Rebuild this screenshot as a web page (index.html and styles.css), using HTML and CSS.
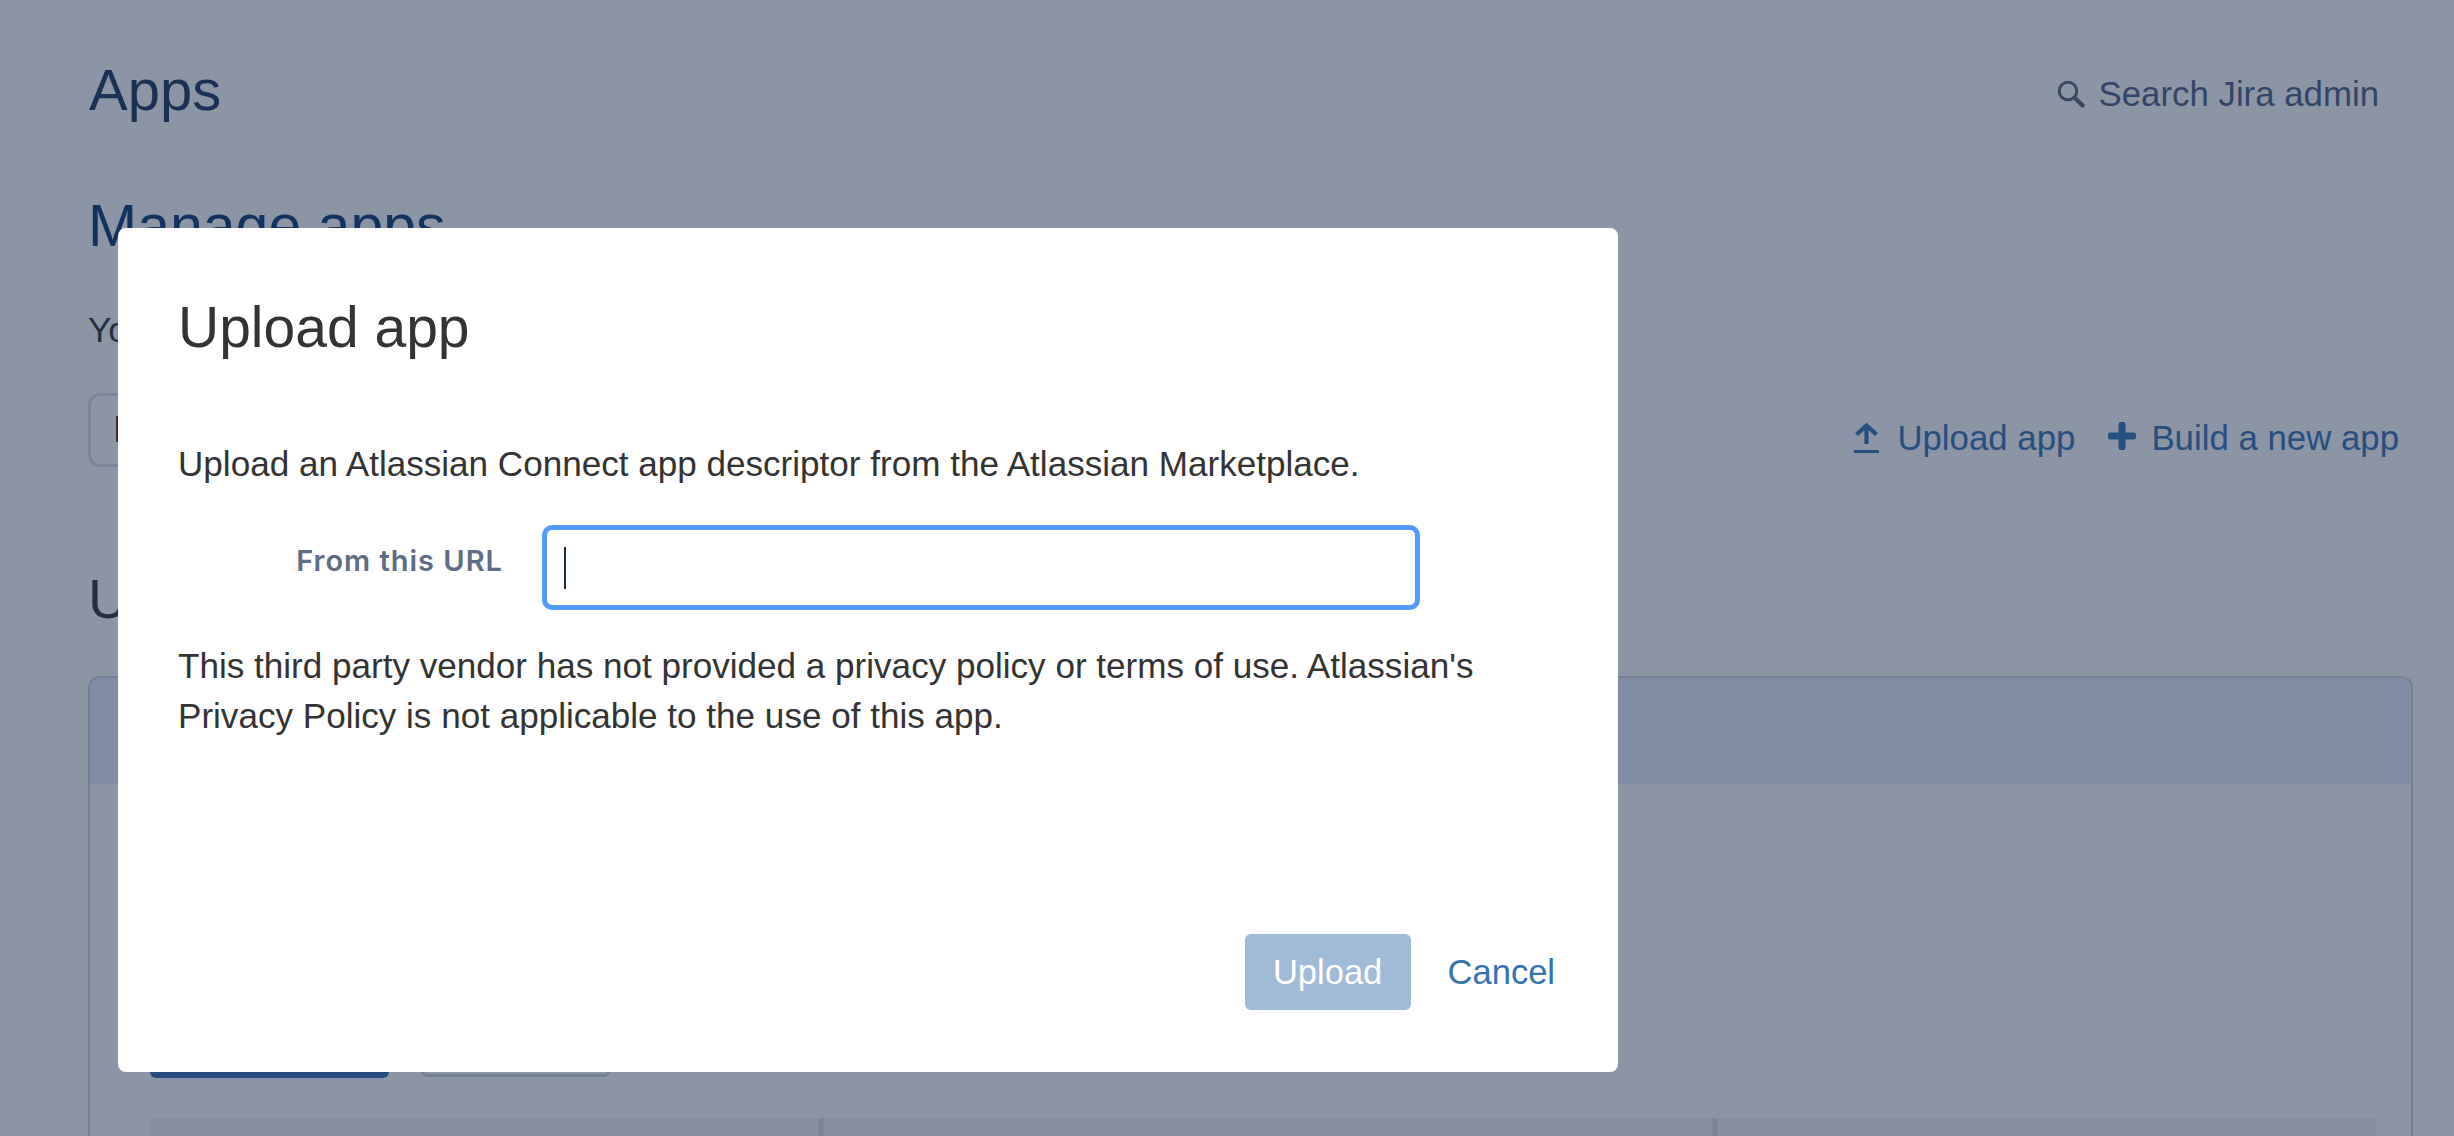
FILE: index.html
```html
<!DOCTYPE html>
<html lang="en">
<head>
<meta charset="utf-8">
<title>Apps</title>
<link rel="stylesheet" href="styles.css">
</head>
<body>
<main class="page">
  <header class="top-row">
    <h1 class="page-title">Apps</h1>
    <a class="search-link" href="#">
      <svg class="search-icon" viewBox="0 0 28 28" aria-hidden="true"><circle cx="11" cy="11" r="8.8" fill="none" stroke="#5a6475" stroke-width="3"/><path d="M17.5 17.5l8 8" fill="none" stroke="#5a6475" stroke-width="4.2" stroke-linecap="round"/></svg>
      <span>Search Jira admin</span>
    </a>
  </header>
  <h2 class="section-title">Manage apps</h2>
  <p class="intro">You can install, update, enable, and disable apps here.</p>
  <div class="toolbar">
    <div class="filter">Filter visible apps</div>
    <div class="actions">
      <a class="action action-upload" href="#">
        <svg class="upload-icon" viewBox="0 0 25 30" aria-hidden="true"><path d="M12.5 21V3M2.5 11.5l10-9 10 9" fill="none" stroke="currentColor" stroke-width="4.2"/><path d="M0 28.5h25" stroke="currentColor" stroke-width="3"/></svg>
        <span>Upload app</span>
      </a>
      <a class="action action-build" href="#">
        <svg class="plus-icon" viewBox="0 0 28 28" aria-hidden="true"><path d="M14 3v22M3 14h22" fill="none" stroke="currentColor" stroke-width="7" stroke-linecap="round"/></svg>
        <span>Build a new app</span>
      </a>
    </div>
  </div>
  <h2 class="list-title">User-installed apps</h2>
  <section class="panel">
    <div class="panel-head"></div>
    <div class="panel-body">
      <div class="panel-buttons">
        <span class="btn-primary"></span>
        <span class="btn-secondary"></span>
      </div>
      <div class="table-band">
        <div class="cell cell-a"></div>
        <div class="cell cell-b"></div>
        <div class="cell cell-c"></div>
      </div>
    </div>
  </section>
</main>
<div class="blanket"></div>
<div class="modal" role="dialog" aria-labelledby="modal-title">
  <h2 class="modal-title" id="modal-title">Upload app</h2>
  <p class="modal-lead">Upload an Atlassian Connect app descriptor from the Atlassian Marketplace.</p>
  <div class="form-row">
    <label class="form-label">From this URL</label>
    <div class="form-input"><span class="caret"></span></div>
  </div>
  <p class="modal-note">This third party vendor has not provided a privacy policy or terms of use. Atlassian's Privacy Policy is not applicable to the use of this app.</p>
  <footer class="modal-footer">
    <span class="upload-btn">Upload</span>
    <a class="cancel-link" href="#">Cancel</a>
  </footer>
</div>
</body>
</html>
```
FILE: styles.css
```css
* { box-sizing: border-box; }
html, body { margin: 0; height: 100%; }
body {
  width: 2454px;
  height: 1136px;
  overflow: hidden;
  background: #fff;
  font-family: "Liberation Sans", Arial, sans-serif;
  color: #333;
}
a { text-decoration: none; }
h1, h2, p { margin: 0; font-weight: 400; }

.page { height: 1136px; padding: 57px 41px 0 88px; overflow: hidden; }

.top-row { display: flex; justify-content: space-between; height: 66px; }
.page-title { padding-left: 1px; font-size: 58px; line-height: 66px; color: #1d355d; }
.search-link { display: flex; align-items: center; gap: 14px; height: 74px; padding-right: 34px; color: #4d5f82; font-size: 34.8px; }
.search-icon { width: 28px; height: 28px; }

.section-title { margin-top: 70px; font-size: 59px; line-height: 66px; color: #0d3971; }
.intro { margin-top: 47px; font-size: 35px; line-height: 48px; color: #333; }

.toolbar { display: flex; justify-content: space-between; align-items: center; margin-top: 39px; height: 74px; }
.filter { width: 800px; height: 74px; padding-left: 22px; border: 3px solid #dfe1e6; border-radius: 12px; font-size: 37px; line-height: 68px; color: #333; }
.actions { display: flex; gap: 33px; padding-top: 16px; padding-right: 14px; }
.action { display: flex; align-items: center; color: #3572b0; font-size: 34.8px; line-height: 40px; }
.action-upload { gap: 18px; }
.action-build { gap: 15px; }
.upload-icon { width: 25px; height: 30px; }
.plus-icon { width: 28px; height: 28px; margin-top: -4px; }

.list-title { margin-top: 100px; font-size: 56px; line-height: 64px; color: #333; }

.panel { margin-top: 45px; height: 460px; border: 2px solid #cfd2d9; border-bottom: 0; border-radius: 12px 12px 0 0; overflow: hidden; }
.panel-head { height: 106px; margin-right: 1px; background: #e9edfb; }
.panel-body { padding: 218px 35px 0 60px; }
.panel-buttons { display: flex; gap: 32px; }
.btn-primary { width: 239px; height: 76px; background: #3572b0; border-radius: 6px; }
.btn-secondary { width: 189px; height: 75px; border: 3px solid #cfd2d9; border-radius: 6px; }
.table-band { display: grid; grid-template-columns: 668px 888px 658px; column-gap: 6px; margin-top: 40px; background: #dfe1e6; height: 18px; }
.cell { background: #f4f5f7; }

.blanket { position: fixed; inset: 0; background: rgba(23, 43, 77, 0.5); }

.modal {
  position: absolute;
  left: 118px;
  top: 228px;
  width: 1500px;
  height: 844px;
  padding: 67px 63px 62px 60px;
  display: flex;
  flex-direction: column;
  background: #fff;
  border-radius: 8px;
}
.modal-title { font-size: 57px; line-height: 64px; color: #333; }
.modal-lead { margin-top: 80px; font-size: 35.1px; line-height: 50px; color: #333; }
.form-row { display: flex; align-items: center; gap: 39px; margin-top: 36px; }
.form-label { width: 325px; margin-bottom: 14px; text-align: right; font-family: Inter, "Liberation Sans", sans-serif; font-weight: 600; font-size: 29px; letter-spacing: 1px; color: #5e6c84; }
.form-input { display: flex; align-items: center; width: 878px; height: 85px; padding-left: 17px; border: 5px solid #529bfa; border-radius: 10px; }
.caret { width: 2px; height: 42px; background: #172b4d; }
.modal-note { margin-top: 31px; font-size: 35.1px; line-height: 50px; color: #333; }

.modal-footer { margin-top: auto; display: flex; justify-content: flex-end; align-items: center; gap: 37px; }
.upload-btn { width: 166px; height: 76px; border-radius: 6px; background: #a0bbd8; color: #fff; font-size: 34.5px; line-height: 76px; text-align: center; }
.cancel-link { color: #3572b0; font-size: 34.5px; }
```
